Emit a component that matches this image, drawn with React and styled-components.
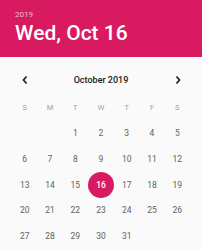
import React from "react";
import styled, { createGlobalStyle } from "styled-components";

const Global = createGlobalStyle`
  html, body { margin: 0; padding: 0; background: #fafafa; }
  body { font-family: Roboto, "Liberation Sans", sans-serif; }
`;

const Wrap = styled.div`
  width: 202px;
  height: 250px;
  background: #fafafa;
  overflow: hidden;
`;

const Header = styled.div`
  background: #d81b60;
  height: 57px;
  box-sizing: border-box;
  padding: 9px 15px 0 15px;
  display: flex;
  flex-direction: column;
`;

const Year = styled.div`
  color: rgba(255, 255, 255, 0.7);
  font-size: 8px;
  line-height: 11px;
`;

const Title = styled.div`
  color: #fff;
  font-size: 21px;
  font-weight: 500;
  line-height: 24px;
  margin-top: 1px;
`;

const Body = styled.div`
  padding: 11px 12px 0 12px;
`;

const MonthRow = styled.div`
  display: flex;
  align-items: center;
  justify-content: space-between;
  height: 24px;
  margin-bottom: 3px;
`;

const Nav = styled.div`
  width: 25px;
  display: flex;
  justify-content: center;
  align-items: center;
`;

const MonthLabel = styled.div`
  font-size: 9px;
  font-weight: 500;
  color: #212121;
`;

const Grid = styled.div`
  display: grid;
  grid-template-columns: repeat(7, 1fr);
  grid-auto-rows: 25.6px;
`;

const Cell = styled.div`
  display: flex;
  align-items: center;
  justify-content: center;
  font-size: ${(p) => (p.$weekday ? "7.5px" : "8.5px")};
  color: ${(p) => (p.$weekday ? "#9e9e9e" : "#616161")};
`;

const Selected = styled.div`
  width: 26px;
  height: 26px;
  border-radius: 50%;
  background: #d81b60;
  color: #fff;
  display: flex;
  align-items: center;
  justify-content: center;
  font-weight: 500;
`;

const Chevron = ({ dir }) => (
  <svg width="8" height="10" viewBox="0 0 8 10">
    <path
      d={dir === "left" ? "M5.5 1.5 L2.5 5 L5.5 8.5" : "M2.5 1.5 L5.5 5 L2.5 8.5"}
      fill="none"
      stroke="#212121"
      strokeWidth="1.7"
    />
  </svg>
);

export default function App() {
  const weekdays = ["S", "M", "T", "W", "T", "F", "S"];
  const cells = [];
  for (let i = 0; i < 2; i++) cells.push(null);
  for (let d = 1; d <= 31; d++) cells.push(d);
  return (
    <Wrap>
      <Global />
      <Header>
        <Year>2019</Year>
        <Title>Wed, Oct 16</Title>
      </Header>
      <Body>
        <MonthRow>
          <Nav><Chevron dir="left" /></Nav>
          <MonthLabel>October 2019</MonthLabel>
          <Nav><Chevron dir="right" /></Nav>
        </MonthRow>
        <Grid>
          {weekdays.map((w, i) => (
            <Cell key={"w" + i} $weekday>{w}</Cell>
          ))}
          {cells.map((d, i) => (
            <Cell key={i}>
              {d === 16 ? <Selected>{d}</Selected> : d}
            </Cell>
          ))}
        </Grid>
      </Body>
    </Wrap>
  );
}
